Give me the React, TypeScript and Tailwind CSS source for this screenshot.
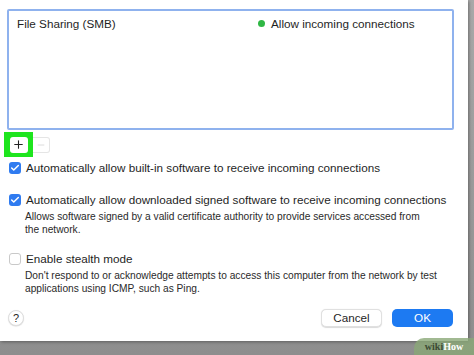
import { Check, Plus, Minus } from "lucide-react";

function Box({ checked }: { checked: boolean }) {
  return checked ? (
    <span className="flex h-[12px] w-[12px] shrink-0 items-center justify-center rounded-[3px] bg-[#2f7bf0]">
      <Check size={10} strokeWidth={3.5} className="text-white" />
    </span>
  ) : (
    <span className="h-[12px] w-[12px] shrink-0 rounded-[3px] border border-[#c9c9c9] bg-white" />
  );
}

export default function App() {
  return (
    <div
      className="relative h-[355px] w-[474px] overflow-hidden bg-gradient-to-b from-[#a9a9a9] to-[#8e8e8e] text-[#1f1f1f]"
      style={{ fontFamily: '"Liberation Sans", Arial, sans-serif' }}
    >
      <div className="flex h-[341px] w-[468px] flex-col bg-white shadow-[1px_1px_3px_rgba(0,0,0,0.35)]">
        {/* list */}
        <div className="ml-[7px] mt-[9px] h-[121px] w-[447px] rounded-[2px] border-2 border-[#8fb2ee] bg-white">
          <div className="flex items-center pt-[5px] text-[11.7px] leading-[15px]">
            <span className="w-[240px] pl-[8px]">File Sharing (SMB)</span>
            <span className="ml-[9px] h-[7px] w-[7px] rounded-full bg-[#2fb744]" />
            <span className="ml-[6px]">Allow incoming connections</span>
          </div>
        </div>

        {/* + / - */}
        <div className="ml-[4px] mt-[2px] flex items-center">
          <div className="flex h-[25px] w-[29px] items-center justify-center bg-[#1ee51e]">
            <span className="flex h-[16px] w-[18px] items-center justify-center rounded-[3px] bg-white">
              <Plus size={13} strokeWidth={2} className="text-[#222]" />
            </span>
          </div>
          <span className="flex h-[16px] w-[17px] items-center justify-center rounded-r-[3px] border border-l-0 border-[#e5e5e5] bg-white">
            <Minus size={10} strokeWidth={1.5} className="text-[#c8c8c8]" />
          </span>
        </div>

        {/* options */}
        <div className="ml-[9px] mt-[3px] flex items-center gap-[5px] whitespace-nowrap text-[11.7px] leading-[15px]">
          <Box checked />
          <span>Automatically allow built-in software to receive incoming connections</span>
        </div>

        <div className="ml-[9px] mt-[17px] flex items-center gap-[5px] whitespace-nowrap text-[11.7px] leading-[15px]">
          <Box checked />
          <span>Automatically allow downloaded signed software to receive incoming connections</span>
        </div>
        <p className="ml-[25px] mt-[3px] w-[400px] text-[10.2px] leading-[13px] text-[#2a2a2a]">
          Allows software signed by a valid certificate authority to provide services accessed from the network.
        </p>

        <div className="ml-[9px] mt-[15px] flex items-center gap-[5px] whitespace-nowrap text-[11.7px] leading-[15px]">
          <Box checked={false} />
          <span>Enable stealth mode</span>
        </div>
        <p className="ml-[25px] mt-[3px] w-[420px] text-[10.2px] leading-[13px] text-[#2a2a2a]">
          Don't respond to or acknowledge attempts to access this computer from the network by test applications using ICMP, such as Ping.
        </p>

        {/* footer */}
        <div className="mt-auto mb-[14px] flex items-center pl-[8px] pr-[15px]">
          <span className="flex h-[16px] w-[16px] items-center justify-center rounded-full border border-[#dedede] bg-white text-[11px] shadow-[0_0.5px_1px_rgba(0,0,0,0.15)]">
            ?
          </span>
          <div className="ml-auto flex gap-[10px]">
            <button className="h-[18px] w-[61px] rounded-[5px] border border-[#e0e0e0] bg-white text-[11.7px] leading-[16px] shadow-[0_0.5px_1px_rgba(0,0,0,0.15)]">
              Cancel
            </button>
            <button className="h-[18px] w-[61px] rounded-[5px] bg-[#1d7af2] text-[11.7px] leading-[18px] text-white">
              OK
            </button>
          </div>
        </div>
      </div>

      {/* watermark */}
      <div className="absolute bottom-0 right-0 flex h-[17px] w-[60px] items-center justify-center rounded-tl-[10px] bg-[#8aa877]/80 text-[10px] font-bold">
        <span className="text-[#3b4a33]" style={{ fontFamily: '"Liberation Serif", serif' }}>wiki</span>
        <span className="text-white" style={{ fontFamily: '"Liberation Serif", serif' }}>How</span>
      </div>
    </div>
  );
}
